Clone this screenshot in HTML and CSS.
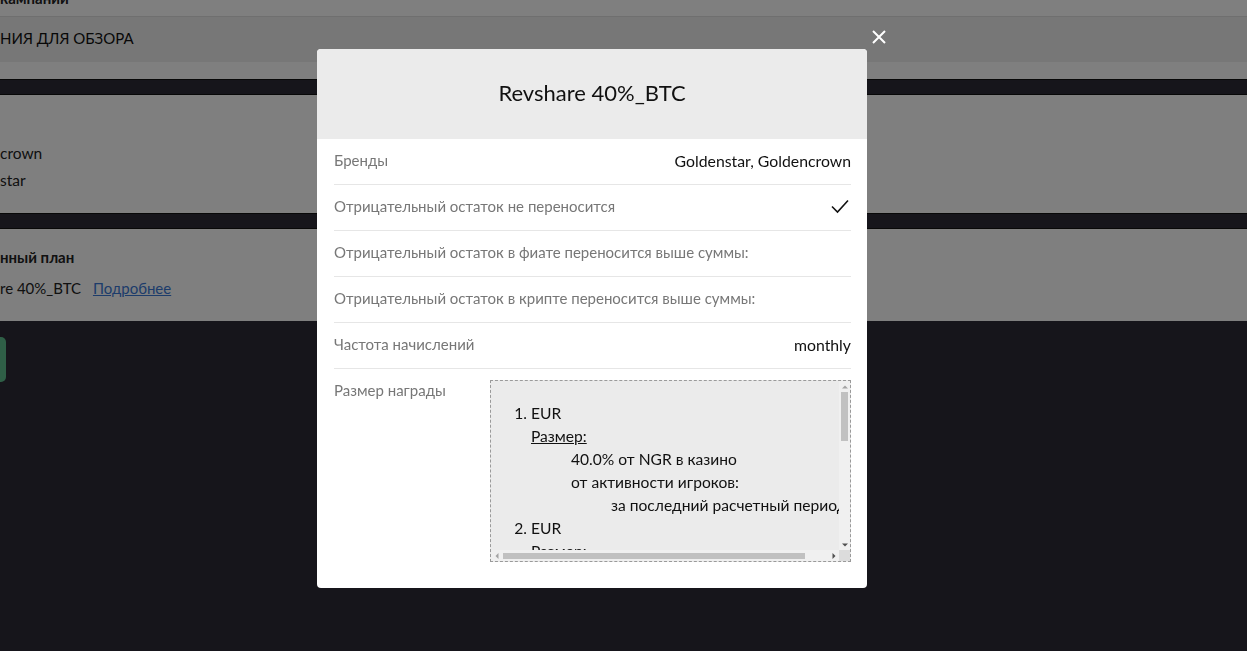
FILE: index.html
```html
<!DOCTYPE html>
<html lang="ru">
<head>
<meta charset="utf-8">
<title>Revshare 40%_BTC</title>
<link rel="stylesheet" href="styles.css">
</head>
<body>
<div class="page">
  <section class="sec sec-top"><div class="cut-title">кампании</div></section>
  <div class="tabrow">НИЯ ДЛЯ ОБЗОРА</div>
  <div class="tab-pad"></div>
  <div class="gap"></div>
  <section class="sec brands">
    <div class="line">crown</div>
    <div class="line">star</div>
  </section>
  <div class="gap"></div>
  <section class="sec plan">
    <div class="plan-title">нный план</div>
    <div class="plan-line">re 40%_BTC <a class="more" href="#">Подробнее</a></div>
  </section>
  <div class="bottom">
    <div class="green-btn"></div>
  </div>
</div>

<div class="overlay"></div>

<button class="close" aria-label="Закрыть">
  <svg width="16" height="16" viewBox="0 0 16 16"><path d="M2 2 L14 14 M14 2 L2 14" stroke="#fff" stroke-width="2" fill="none"/></svg>
</button>

<div class="modal">
  <div class="modal-head">Revshare 40%_BTC</div>
  <div class="modal-body">
    <div class="row">
      <span class="label">Бренды</span>
      <span class="value">Goldenstar, Goldencrown</span>
    </div>
    <div class="row">
      <span class="label">Отрицательный остаток не переносится</span>
      <span class="value check"><svg width="18" height="15" viewBox="0 0 18 15"><path d="M1 7.5 L6.5 13 L17 1.5" stroke="#111" stroke-width="1.6" fill="none"/></svg></span>
    </div>
    <div class="row">
      <span class="label">Отрицательный остаток в фиате переносится выше суммы:</span>
    </div>
    <div class="row">
      <span class="label">Отрицательный остаток в крипте переносится выше суммы:</span>
    </div>
    <div class="row">
      <span class="label">Частота начислений</span>
      <span class="value">monthly</span>
    </div>
    <div class="row row-last">
      <span class="label label-fixed">Размер награды</span>
      <div class="reward-box">
        <div class="reward-view">
          <ol class="reward-list">
            <li>EUR
              <div class="r-size">Размер:</div>
              <div class="r-ind1">40.0% от NGR в казино</div>
              <div class="r-ind1">от активности игроков:</div>
              <div class="r-ind2">за последний расчетный период</div>
            </li>
            <li>EUR
              <div class="r-size">Размер:</div>
              <div class="r-ind1">40.0% от NGR в казино</div>
              <div class="r-ind1">от активности игроков:</div>
              <div class="r-ind2">за последний расчетный период</div>
            </li>
          </ol>
        </div>
        <div class="vbar">
          <span class="arr arr-up"></span>
          <div class="vtrack"><div class="vthumb"></div></div>
          <span class="arr arr-down"></span>
        </div>
        <div class="hbar">
          <span class="arr arr-left"></span>
          <div class="htrack"><div class="hthumb"></div></div>
          <span class="arr arr-right"></span>
        </div>
        <div class="corner"></div>
      </div>
    </div>
  </div>
</div>
</body>
</html>
```

FILE: styles.css
```css
* { box-sizing: border-box; }
html, body { margin: 0; padding: 0; height: 100%; overflow: hidden; }
body {
  background: #2c2a36;
  font-family: Lato, "Noto Sans", sans-serif;
  color: #222;
  font-size: 16px;
}
.page { width: 100%; }
.sec { background: #fff; }
.sec-top { height: 16px; overflow: hidden; }
.cut-title {
  font-weight: 700;
  font-size: 15px;
  line-height: 20px;
  margin-top: -12px;
}
.tabrow {
  background: #eeeeee;
  border-top: 1px solid #dedede;
  height: 46px;
  line-height: 42px;
  font-size: 15px;
  color: #111;
}
.tab-pad { height: 17px; background: #fff; }
.gap { height: 16px; background: #2c2a36; border-top: 1px solid #111; border-bottom: 1px solid #111; }
.brands { height: 118px; padding-top: 45px; }
.brands .line { line-height: 27px; font-size: 15.5px; color: #222; }
.plan { height: 92px; padding-top: 16px; }
.plan-title { font-weight: 700; line-height: 24px; font-size: 15px; }
.plan-line { line-height: 24px; margin-top: 7px; font-size: 15px; }
.more { color: #3a79d6; margin-left: 8px; }
.bottom { padding-top: 16px; }
.green-btn {
  width: 6px;
  height: 45px;
  background: #5ebf8e;
  border-radius: 0 5px 5px 0;
}

.overlay {
  position: fixed;
  inset: 0;
  background: rgba(0, 0, 0, 0.5);
}

.close {
  position: fixed;
  left: 871px;
  top: 29px;
  width: 16px;
  height: 16px;
  padding: 0;
  border: 0;
  background: transparent;
  cursor: pointer;
}
.close svg { display: block; }

.modal {
  position: fixed;
  left: 317px;
  top: 49px;
  width: 550px;
  background: #fff;
  border-radius: 4px;
  overflow: hidden;
}
.modal-head {
  background: #ebebeb;
  height: 90px;
  display: flex;
  align-items: center;
  justify-content: center;
  font-size: 22px;
  color: #111;
  padding-bottom: 3px;
}
.modal-body { padding: 0 16px 26px 17px; }
.row {
  display: flex;
  justify-content: space-between;
  align-items: center;
  height: 46px;
  padding-bottom: 3px;
  border-bottom: 1px solid #e6e6e6;
}
.label { color: #777; font-size: 15px; }
.value { color: #111; font-size: 15.8px; }
.check svg { display: block; margin-right: 2px; }
.row-last {
  height: auto;
  border-bottom: 0;
  align-items: flex-start;
  justify-content: flex-start;
  padding-top: 11px;
  padding-bottom: 0;
}
.label-fixed { width: 156px; flex: none; line-height: 20px; }

.reward-box {
  width: 362px;
  height: 182px;
  border: 1px dashed #9a9a9a;
  background: #ebebeb;
  display: grid;
  grid-template-columns: 1fr 11px;
  grid-template-rows: 1fr 11px;
  font-size: 15.6px;
  color: #111;
  white-space: nowrap;
}
.reward-view { overflow: hidden; }
.reward-list {
  margin: 21px 0 0 0;
  padding: 0 0 0 40px;
  line-height: 23px;
}
.r-size { text-decoration: underline; }
.r-ind1 { padding-left: 40px; }
.r-ind2 { padding-left: 80px; }

.vbar {
  background: #f0f0f0;
  display: flex;
  flex-direction: column;
  align-items: center;
}
.vtrack { flex: 1; width: 100%; padding: 0 2px; }
.vthumb { height: 49px; background: #c1c1c1; }
.hbar {
  background: #f0f0f0;
  display: flex;
  align-items: center;
}
.htrack { flex: 1; height: 100%; padding: 3px 0 2px; }
.hthumb { width: 302px; height: 100%; background: #c1c1c1; margin-left: 1px; }
.corner { background: #dcdcdc; }

.arr { display: block; width: 11px; height: 11px; flex: none; position: relative; }
.arr::after {
  content: "";
  position: absolute;
  left: 50%;
  top: 50%;
  width: 0;
  height: 0;
  border: 3px solid transparent;
}
.arr-up::after { border-bottom: 3px solid #a3a3a3; border-top-width: 0; transform: translate(-50%, -50%); }
.arr-down::after { border-top: 3px solid #505050; border-bottom-width: 0; transform: translate(-50%, -50%); }
.arr-left::after { border-right: 3px solid #a3a3a3; border-left-width: 0; transform: translate(-50%, -50%); }
.arr-right::after { border-left: 3px solid #505050; border-right-width: 0; transform: translate(-50%, -50%); }
```
